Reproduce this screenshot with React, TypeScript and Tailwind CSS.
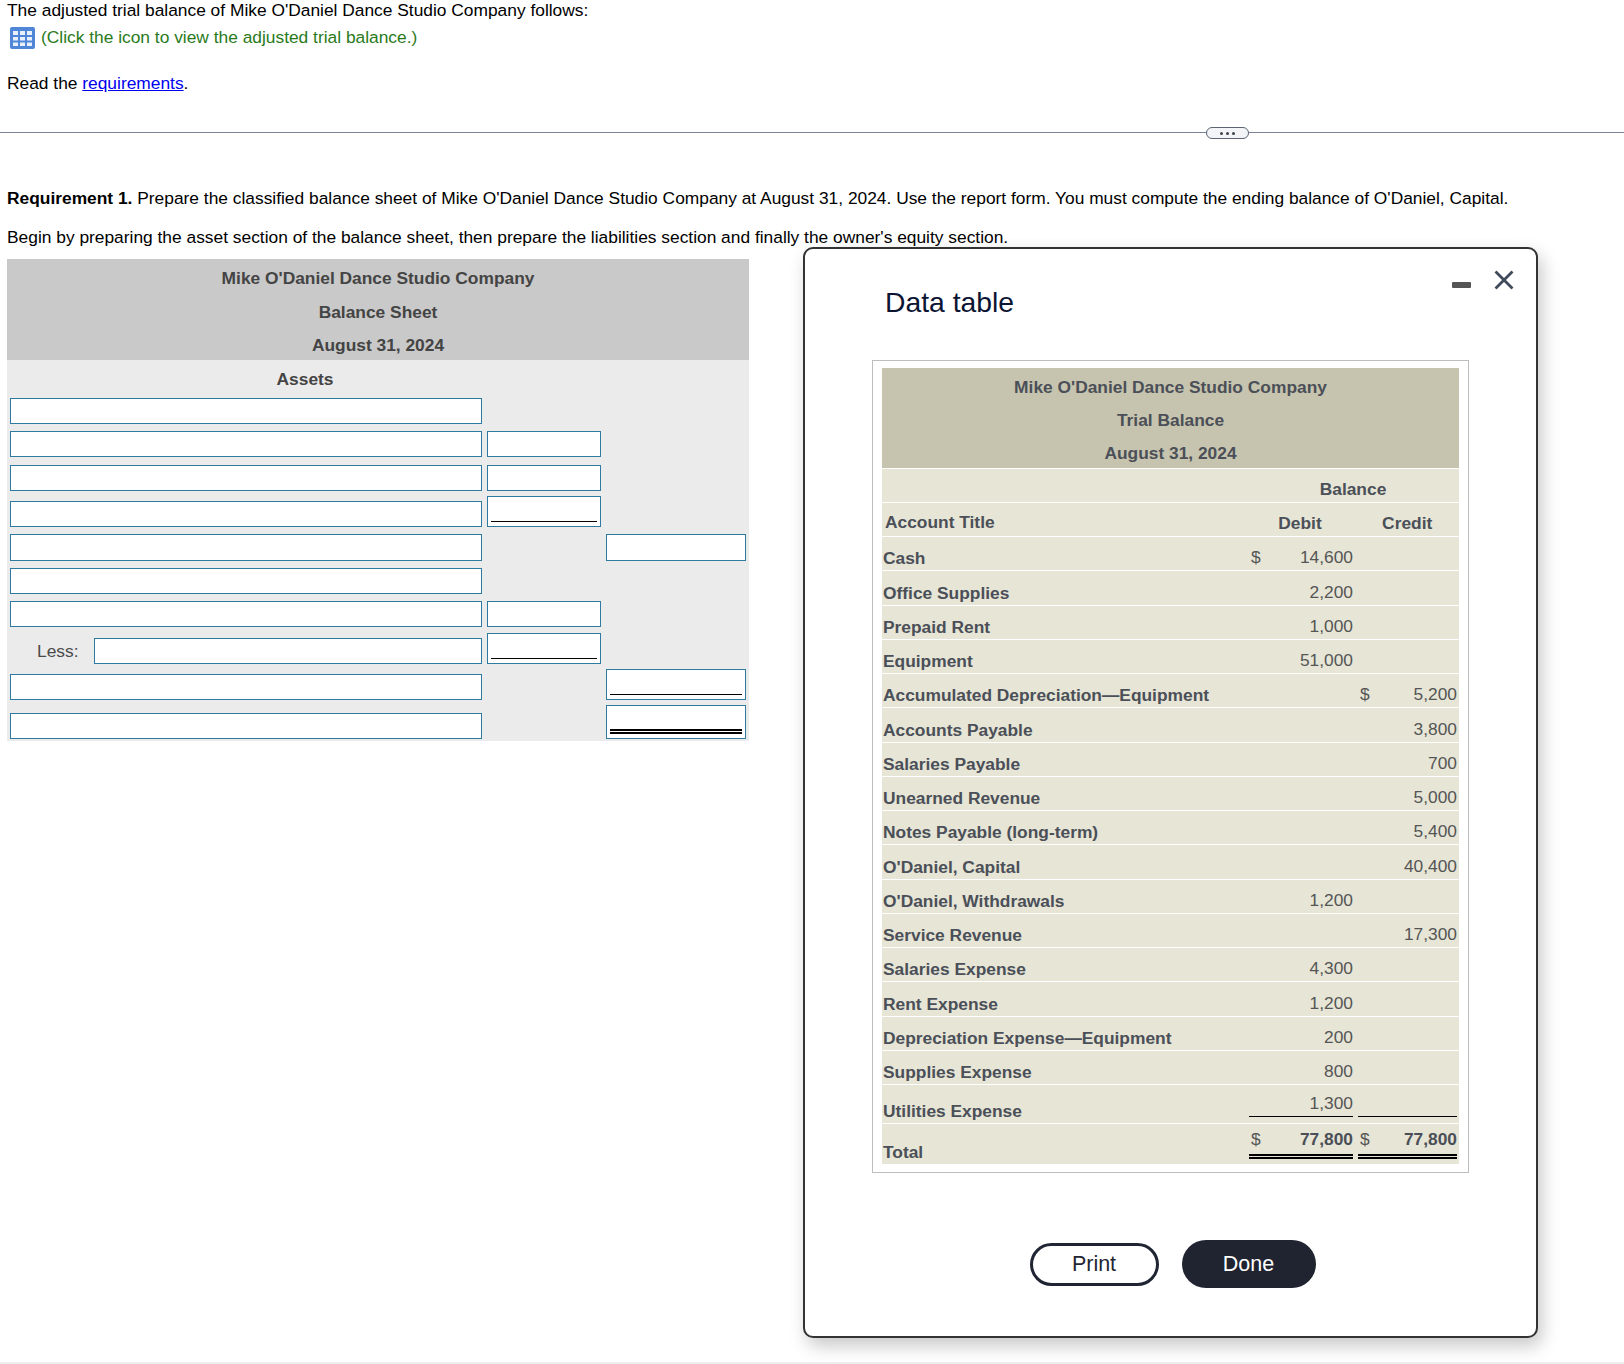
const font = "font-['Liberation_Sans',Arial,sans-serif]";

const trialRows = [
  { name: "Cash", debit: "14,600", sign: true },
  { name: "Office Supplies", debit: "2,200" },
  { name: "Prepaid Rent", debit: "1,000" },
  { name: "Equipment", debit: "51,000" },
  { name: "Accumulated Depreciation—Equipment", credit: "5,200", sign: true },
  { name: "Accounts Payable", credit: "3,800" },
  { name: "Salaries Payable", credit: "700" },
  { name: "Unearned Revenue", credit: "5,000" },
  { name: "Notes Payable (long-term)", credit: "5,400" },
  { name: "O'Daniel, Capital", credit: "40,400" },
  { name: "O'Daniel, Withdrawals", debit: "1,200" },
  { name: "Service Revenue", credit: "17,300" },
  { name: "Salaries Expense", debit: "4,300" },
  { name: "Rent Expense", debit: "1,200" },
  { name: "Depreciation Expense—Equipment", debit: "200" },
  { name: "Supplies Expense", debit: "800" },
];

const TextBox = () => (
  <input className="block w-full h-full bg-white border border-[#2f7aa1] outline-none" />
);

const AmountBox = ({ line }: { line?: "single" | "double" }) => {
  if (!line) return <TextBox />;
  return (
    <div className="w-full h-full bg-white border border-[#2f7aa1] px-[3px] pb-[4px]">
      <input
        className={`block w-full h-full bg-white outline-none border-black ${
          line === "double" ? "border-b-[5px] border-double" : "border-b"
        }`}
      />
    </div>
  );
};

// one row of the balance sheet form: label box, amount box, total box
const FormRow = ({
  height,
  boxHeight = "h-[26px]",
  less,
  amount,
  amountHeight = "h-[26px]",
  amountLine,
  total,
  totalHeight = "h-[27px]",
  totalLine,
}: {
  height: string;
  boxHeight?: string;
  less?: boolean;
  amount?: boolean;
  amountHeight?: string;
  amountLine?: "single" | "double";
  total?: boolean;
  totalHeight?: string;
  totalLine?: "single" | "double";
}) => (
  <div className={`flex items-end pl-[3px] ${height}`}>
    <div className={`flex items-center w-[472px] ${boxHeight}`}>
      {less && <span className="w-[84px] pl-[27px] pt-[1px] text-[#4a4a4a] shrink-0">Less:</span>}
      <TextBox />
    </div>
    <div className={`w-[114px] ml-[5px] ${amountHeight}`}>{amount && <AmountBox line={amountLine} />}</div>
    <div className={`w-[140px] ml-[5px] ${totalHeight}`}>{total && <AmountBox line={totalLine} />}</div>
  </div>
);

const BalanceSheet = () => (
  <div className="w-[742px] mt-[12px] bg-[#ebebeb]">
    <div className="h-[101px] bg-[#c9c9c9] pt-[3px] text-center font-bold text-[#444] leading-[33.5px]">
      <div>Mike O'Daniel Dance Studio Company</div>
      <div>Balance Sheet</div>
      <div>August 31, 2024</div>
    </div>
    <div className="w-[596px] pt-[9px] text-center font-bold text-[#444] leading-[20px]">Assets</div>
    <div className="pb-[2px]">
      <FormRow height="h-[35px]" />
      <FormRow height="h-[33px]" amount />
      <FormRow height="h-[34px]" amount />
      <FormRow height="h-[36px]" amount amountHeight="h-[31px]" amountLine="single" />
      <FormRow height="h-[34px]" boxHeight="h-[27px]" total />
      <FormRow height="h-[33px]" />
      <FormRow height="h-[33px]" amount />
      <FormRow height="h-[37px]" less amount amountHeight="h-[31px]" amountLine="single" />
      <FormRow height="h-[36px]" total totalHeight="h-[31px]" totalLine="single" />
      <FormRow height="h-[39px]" total totalHeight="h-[34px]" totalLine="double" />
    </div>
  </div>
);

const Money = ({ sign, value }: { sign?: boolean; value?: string }) => (
  <div className="flex justify-between pb-[3px] leading-[20px] text-[#555]">
    <span className="pl-[2px]">{sign ? "$" : ""}</span>
    <span>{value}</span>
  </div>
);

const TrialBalance = () => (
  <div className="w-[597px] mt-[111px] ml-[67px] border border-[#bdbdbd] pt-[7px] pb-[8px] px-[9px]">
    <div className="bg-[#e6e5d6] text-[#4b4f58]">
      <div className="h-[100px] bg-[#c6c4ae] pt-[3px] text-center font-bold leading-[33.5px]">
        <div>Mike O'Daniel Dance Studio Company</div>
        <div className="-mt-[1px]">Trial Balance</div>
        <div>August 31, 2024</div>
      </div>
      <div className="flex h-[35px] items-end border-t border-b border-white font-bold leading-[20px]">
        <div className="w-[367px]" />
        <div className="w-[208px] text-center pb-[3px]">Balance</div>
      </div>
      <div className="flex h-[34px] items-end border-b border-white font-bold leading-[20px]">
        <div className="w-[367px] pl-[3px] pb-[4px]">Account Title</div>
        <div className="w-[104px] pl-[1px] text-center pb-[3px]">Debit</div>
        <div className="w-[104px] ml-[4px] text-center pb-[3px]">Credit</div>
      </div>
      {trialRows.map((row) => (
        <div key={row.name} className="flex h-[34.27px] items-end border-b border-white leading-[20px]">
          <div className="w-[367px] pl-[1px] pb-[2px] font-bold">{row.name}</div>
          <div className="w-[104px]">{row.debit && <Money sign={row.sign} value={row.debit} />}</div>
          <div className="w-[99px] ml-[5px]">{row.credit && <Money sign={row.sign} value={row.credit} />}</div>
        </div>
      ))}
      <div className="flex h-[39px] items-end border-b border-white leading-[20px]">
        <div className="w-[367px] pl-[1px] pb-[2px] font-bold">Utilities Expense</div>
        <div className="w-[104px] mb-[6px] border-b border-black text-right text-[#555] pb-[3px]">1,300</div>
        <div className="w-[99px] ml-[5px] mb-[6px] h-[1px] bg-black" />
      </div>
      <div className="flex h-[40px] items-end leading-[20px]">
        <div className="w-[367px] pl-[1px] pb-[2px] font-bold">Total</div>
        <div className="w-[104px] mb-[5px] border-b-[5px] border-double border-black flex justify-between pb-[5px]">
          <span className="pl-[2px] text-[#555]">$</span>
          <span className="font-bold">77,800</span>
        </div>
        <div className="w-[99px] ml-[5px] mb-[5px] border-b-[5px] border-double border-black flex justify-between pb-[5px]">
          <span className="pl-[2px] text-[#555]">$</span>
          <span className="font-bold">77,800</span>
        </div>
      </div>
    </div>
  </div>
);

const DataModal = () => (
  <div className="absolute left-[803px] top-[247px] w-[735px] h-[1091px] bg-white border-2 border-[#333] rounded-[10px] shadow-[4px_8px_18px_rgba(0,0,0,0.22)]">
    <h2 className="absolute left-[80px] top-[33px] text-[28.3px] leading-[40px] text-[#0b1533]">Data table</h2>
    <div className="absolute left-[647px] top-[33px] w-[19px] h-[6px] rounded-[1px] bg-[#555]" />
    <svg className="absolute left-[689px] top-[21px] w-[20px] h-[20px]" viewBox="0 0 20 20" fill="none" stroke="#3f4a5a" strokeWidth="2.8">
      <path d="M1.5 1.5 18.5 18.5M18.5 1.5 1.5 18.5" />
    </svg>
    <TrialBalance />
    <div className="flex justify-center items-center gap-[23px] mt-[67px] pl-[4px] text-[21.5px]">
      <button className="w-[129px] h-[43px] rounded-full border-[3px] border-[#1f2533] text-[#1f2533] bg-white">Print</button>
      <button className="w-[134px] h-[48px] rounded-full bg-[#1f2430] text-white">Done</button>
    </div>
  </div>
);

export default function App() {
  return (
    <div className={`relative h-[1364px] overflow-hidden bg-white border-b-2 border-[#eeeeee] text-[17.38px] text-black ${font}`}>
      <div className="px-[7px]">
        <p className="leading-[20px]">The adjusted trial balance of Mike O'Daniel Dance Studio Company follows:</p>
        <p className="flex items-center h-[22px] mt-[6px] leading-[20px] text-[#2a7a1c]">
          <svg className="ml-[3px] mr-[6px] mt-[2px] shrink-0" width="25" height="22" viewBox="0 0 25 22">
            <rect width="25" height="22" rx="2" fill="#4f86d8" />
            <g fill="#e8f0fb">
              <rect x="3" y="4" width="5" height="4" />
              <rect x="10" y="4" width="5" height="4" />
              <rect x="17" y="4" width="5" height="4" />
              <rect x="3" y="10" width="5" height="3.5" />
              <rect x="10" y="10" width="5" height="3.5" />
              <rect x="17" y="10" width="5" height="3.5" />
              <rect x="3" y="15.5" width="5" height="3.5" />
              <rect x="10" y="15.5" width="5" height="3.5" />
              <rect x="17" y="15.5" width="5" height="3.5" />
            </g>
          </svg>
          (Click the icon to view the adjusted trial balance.)
        </p>
        <p className="mt-[25px] leading-[20px]">
          Read the <a href="#" className="text-[#0000ee] underline">requirements</a>.
        </p>
      </div>
      <div className="relative mt-[39px] h-[1px] bg-[#7d8499]">
        <div className="absolute left-[1206px] top-[-5px] flex justify-center items-center gap-[3px] w-[43px] h-[12px] rounded-full border border-[#5a6472] bg-[#f2f4f7]">
          <span className="w-[3px] h-[3px] rounded-full bg-[#3c4450]" />
          <span className="w-[3px] h-[3px] rounded-full bg-[#3c4450]" />
          <span className="w-[3px] h-[3px] rounded-full bg-[#3c4450]" />
        </div>
      </div>
      <div className="px-[7px]">
        <p className="mt-[55px] leading-[20px]">
          <b>Requirement 1.</b> Prepare the classified balance sheet of Mike O'Daniel Dance Studio Company at August 31, 2024. Use the report form. You must compute the ending balance of O'Daniel, Capital.
        </p>
        <p className="mt-[19px] leading-[20px]">
          Begin by preparing the asset section of the balance sheet, then prepare the liabilities section and finally the owner's equity section.
        </p>
        <BalanceSheet />
      </div>
      <DataModal />
    </div>
  );
}
